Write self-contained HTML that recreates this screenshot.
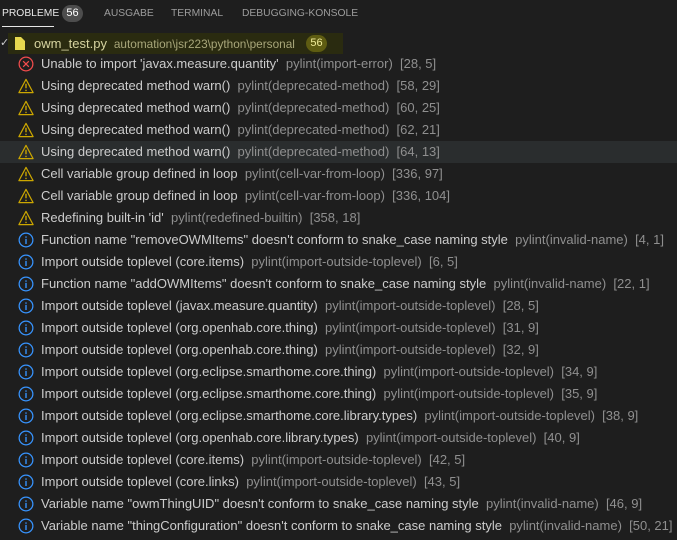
<!DOCTYPE html><html><head><style>
body{margin:0;width:677px;height:540px;background:#1e1e1e;font-family:"Liberation Sans",sans-serif;overflow:hidden;position:relative;color:#cccccc}
.tab{position:absolute;top:8px;font-size:10.3px;color:#9d9d9d}
.row{position:absolute;left:0;width:677px;height:22px;line-height:22px;font-size:13px;white-space:nowrap}
.row .ic{position:absolute;left:18px;top:3px;width:16px;height:16px}
.row .t{position:absolute;left:41px}
.s{color:#8f8f8f}
</style></head><body>
<div class="tab" style="left:2px;color:#e7e7e7">PROBLEME</div>
<div style="position:absolute;left:62px;top:5px;width:21px;height:17px;border-radius:9px;background:#4d4d4d;color:#fff;font-size:11px;line-height:17px;text-align:center">56</div>
<div style="position:absolute;left:2px;top:26px;width:52px;height:1px;background:#e7e7e7"></div>
<div class="tab" style="left:104px">AUSGABE</div>
<div class="tab" style="left:171px">TERMINAL</div>
<div class="tab" style="left:242px">DEBUGGING-KONSOLE</div>
<div style="position:absolute;left:8px;top:33px;width:335px;height:21px;background:#2a2b10"></div>
<div style="position:absolute;left:0;top:36px;color:#ccc;font-size:11px">✓</div>
<svg style="position:absolute;left:15px;top:37px" width="10" height="13"><path d="M0 0H6L10 4V13H0Z" fill="#e6d84f"/></svg>
<div style="position:absolute;left:34px;top:33px;line-height:21px;font-size:13px;color:#d6d3a0;white-space:nowrap">owm_test.py <span style="font-size:11.8px;color:#a8a67a">&nbsp;automation\jsr223\python\personal</span></div>
<div style="position:absolute;left:306px;top:35px;width:21px;height:17px;border-radius:9px;background:#5e5c12;color:#f0ec9a;font-size:11px;line-height:17px;text-align:center">56</div>
<div style="position:absolute;left:0;top:141px;width:677px;height:22px;background:#2a2d2e"></div>
<div id="list"></div>
<script>
var E='<svg class="ic" viewBox="0 0 14 14"><circle cx="7" cy="7" r="6" fill="none" stroke="#f14c4c" stroke-width="1.1"/><path d="M4.5 4.5L9.5 9.5M9.5 4.5L4.5 9.5" stroke="#f14c4c" stroke-width="1.1"/></svg>';
var W='<svg class="ic" viewBox="0 0 14 14"><path d="M7 1.2L13.2 12.8H0.8Z" fill="none" stroke="#cca700" stroke-width="1.1" stroke-linejoin="round"/><path d="M7 5V9M7 10.3V11.5" stroke="#cca700" stroke-width="1.2"/></svg>';
var I='<svg class="ic" viewBox="0 0 14 14"><circle cx="7" cy="7" r="6" fill="none" stroke="#3794ff" stroke-width="1.1"/><path d="M7 6V10.5M7 3.8V5" stroke="#3794ff" stroke-width="1.2"/></svg>';
var R=[[E,"Unable to import 'javax.measure.quantity'","pylint(import-error)","[28, 5]"],
[W,"Using deprecated method warn()","pylint(deprecated-method)","[58, 29]"],
[W,"Using deprecated method warn()","pylint(deprecated-method)","[60, 25]"],
[W,"Using deprecated method warn()","pylint(deprecated-method)","[62, 21]"],
[W,"Using deprecated method warn()","pylint(deprecated-method)","[64, 13]"],
[W,"Cell variable group defined in loop","pylint(cell-var-from-loop)","[336, 97]"],
[W,"Cell variable group defined in loop","pylint(cell-var-from-loop)","[336, 104]"],
[W,"Redefining built-in 'id'","pylint(redefined-builtin)","[358, 18]"],
[I,'Function name "removeOWMItems" doesn\'t conform to snake_case naming style',"pylint(invalid-name)","[4, 1]"],
[I,"Import outside toplevel (core.items)","pylint(import-outside-toplevel)","[6, 5]"],
[I,'Function name "addOWMItems" doesn\'t conform to snake_case naming style',"pylint(invalid-name)","[22, 1]"],
[I,"Import outside toplevel (javax.measure.quantity)","pylint(import-outside-toplevel)","[28, 5]"],
[I,"Import outside toplevel (org.openhab.core.thing)","pylint(import-outside-toplevel)","[31, 9]"],
[I,"Import outside toplevel (org.openhab.core.thing)","pylint(import-outside-toplevel)","[32, 9]"],
[I,"Import outside toplevel (org.eclipse.smarthome.core.thing)","pylint(import-outside-toplevel)","[34, 9]"],
[I,"Import outside toplevel (org.eclipse.smarthome.core.thing)","pylint(import-outside-toplevel)","[35, 9]"],
[I,"Import outside toplevel (org.eclipse.smarthome.core.library.types)","pylint(import-outside-toplevel)","[38, 9]"],
[I,"Import outside toplevel (org.openhab.core.library.types)","pylint(import-outside-toplevel)","[40, 9]"],
[I,"Import outside toplevel (core.items)","pylint(import-outside-toplevel)","[42, 5]"],
[I,"Import outside toplevel (core.links)","pylint(import-outside-toplevel)","[43, 5]"],
[I,'Variable name "owmThingUID" doesn\'t conform to snake_case naming style',"pylint(invalid-name)","[46, 9]"],
[I,'Variable name "thingConfiguration" doesn\'t conform to snake_case naming style',"pylint(invalid-name)","[50, 21]"]];
var h='';R.forEach(function(r,i){h+='<div class="row" style="top:'+(53+22*i)+'px">'+r[0]+'<span class="t">'+r[1]+'&nbsp; <span class="s">'+r[2]+'&nbsp; '+r[3]+'</span></span></div>';});
document.getElementById('list').innerHTML=h;
</script>
</body></html>
